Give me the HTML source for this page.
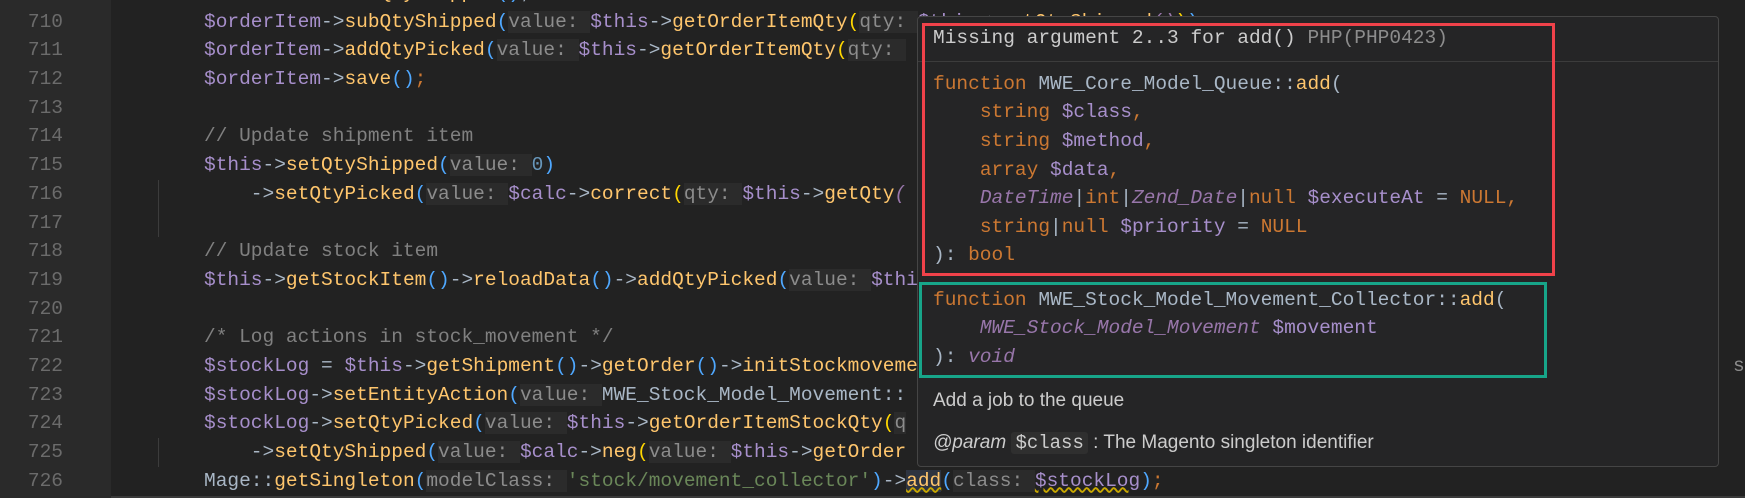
<!DOCTYPE html>
<html><head><meta charset="utf-8"><style>
*{margin:0;padding:0;box-sizing:border-box}
body{width:1745px;height:498px;overflow:hidden;background:#222222;position:relative;font-family:"Liberation Mono",monospace;font-size:19.5px;color:#a9b7c6}
#gut{position:absolute;left:0;top:0;width:111px;height:498px;background:#2a2a2a}
.ln{position:absolute;left:0;width:63px;text-align:right;color:#6b6b6b;line-height:28.7px;height:28.7px}
.cl{position:absolute;left:204px;white-space:pre;line-height:28.7px;height:28.7px}
.g{position:absolute;left:158px;width:1px;background:#3c3c3c}
.v{color:#a78fcb}.m{color:#ffc66d}.p{color:#4fa8ff}.y{color:#ffd700}.h{color:#8c8c8c;background:#2b2b2b}
.c{color:#808080}.s{color:#6a8759}.n{color:#6897bb}.k{color:#cc7832}.i{font-style:italic;color:#9876aa}.o{color:#a9b7c6}
#tip{position:absolute;left:917px;top:16px;width:802px;height:451px;background:#252526;border:1px solid #454545;border-radius:4px}
.tl{position:absolute;white-space:pre;line-height:28.6px;height:28.6px}
.sans{font-family:"Liberation Sans",sans-serif;font-size:19px;color:#cccccc}
</style></head><body>
<div id="gut"></div>
<div class="g" style="top:180px;height:57px"></div>
<div class="g" style="top:438px;height:29px"></div>
<div class="ln" style="top:7.6px">710</div>
<div class="ln" style="top:36.3px">711</div>
<div class="ln" style="top:65px">712</div>
<div class="ln" style="top:93.7px">713</div>
<div class="ln" style="top:122.4px">714</div>
<div class="ln" style="top:151.1px">715</div>
<div class="ln" style="top:179.8px">716</div>
<div class="ln" style="top:208.5px">717</div>
<div class="ln" style="top:237.2px">718</div>
<div class="ln" style="top:265.9px">719</div>
<div class="ln" style="top:294.6px">720</div>
<div class="ln" style="top:323.3px">721</div>
<div class="ln" style="top:352px">722</div>
<div class="ln" style="top:380.7px">723</div>
<div class="ln" style="top:409.4px">724</div>
<div class="ln" style="top:438.1px">725</div>
<div class="ln" style="top:466.8px">726</div>

<div class="cl" style="top:-21.1px"><span class="v">$orderItem</span>-&gt;<span class="m">setQtyShipped</span><span class="p">()</span>;</div>
<div class="cl" style="top:7.6px"><span class="v">$orderItem</span>-&gt;<span class="m">subQtyShipped</span><span class="p">(</span><span class="h">value: </span><span class="v">$this</span>-&gt;<span class="m">getOrderItemQty</span><span class="y">(</span><span class="h">qty: </span><span class="v">$this</span>-&gt;<span class="m">getQtyShipped</span><span class="i">()</span><span class="y">)</span><span class="p">)</span>;</div>
<div class="cl" style="top:36.3px"><span class="v">$orderItem</span>-&gt;<span class="m">addQtyPicked</span><span class="p">(</span><span class="h">value: </span><span class="v">$this</span>-&gt;<span class="m">getOrderItemQty</span><span class="y">(</span><span class="h">qty: </span></div>
<div class="cl" style="top:65px"><span class="v">$orderItem</span>-&gt;<span class="m">save</span><span class="p">()</span><span class="k">;</span></div>
<div class="cl c" style="top:122.4px">// Update shipment item</div>
<div class="cl" style="top:151.1px"><span class="v">$this</span>-&gt;<span class="m">setQtyShipped</span><span class="p">(</span><span class="h">value: </span><span class="n">0</span><span class="p">)</span></div>
<div class="cl" style="top:179.8px">    -&gt;<span class="m">setQtyPicked</span><span class="p">(</span><span class="h">value: </span><span class="v">$calc</span>-&gt;<span class="m">correct</span><span class="y">(</span><span class="h">qty: </span><span class="v">$this</span>-&gt;<span class="m">getQty</span><span class="i">(</span></div>
<div class="cl c" style="top:237.2px">// Update stock item</div>
<div class="cl" style="top:265.9px"><span class="v">$this</span>-&gt;<span class="m">getStockItem</span><span class="p">()</span>-&gt;<span class="m">reloadData</span><span class="p">()</span>-&gt;<span class="m">addQtyPicked</span><span class="p">(</span><span class="h">value: </span><span class="v">$this</span></div>
<div class="cl c" style="top:323.3px">/* Log actions in stock_movement */</div>
<div class="cl" style="top:352px"><span class="v">$stockLog</span> = <span class="v">$this</span>-&gt;<span class="m">getShipment</span><span class="p">()</span>-&gt;<span class="m">getOrder</span><span class="p">()</span>-&gt;<span class="m">initStockmovement</span></div>
<div class="cl" style="top:352px;left:1733px;color:#8c8c8c">s</div>
<div class="cl" style="top:380.7px"><span class="v">$stockLog</span>-&gt;<span class="m">setEntityAction</span><span class="p">(</span><span class="h">value: </span>MWE_Stock_Model_Movement::</div>
<div class="cl" style="top:409.4px"><span class="v">$stockLog</span>-&gt;<span class="m">setQtyPicked</span><span class="p">(</span><span class="h">value: </span><span class="v">$this</span>-&gt;<span class="m">getOrderItemStockQty</span><span class="y">(</span><span class="h">q</span></div>
<div class="cl" style="top:438.1px">    -&gt;<span class="m">setQtyShipped</span><span class="p">(</span><span class="h">value: </span><span class="v">$calc</span>-&gt;<span class="m">neg</span><span class="y">(</span><span class="h">value: </span><span class="v">$this</span>-&gt;<span class="m">getOrder</span></div>
<div class="cl" style="top:466.8px">Mage::<span class="m">getSingleton</span><span class="p">(</span><span class="h">modelClass: </span><span class="s">'stock/movement_collector'</span><span class="p">)</span>-&gt;<span class="m" style="background:#2e3440;text-decoration:underline wavy #c9a800">add</span><span class="p">(</span><span class="h">class: </span><span class="v" style="text-decoration:underline wavy #c9a800">$stockLog</span><span class="p">)</span><span class="k">;</span></div>
<div style="position:absolute;left:111px;top:496px;width:1634px;height:2px;background:#3a3a3a"></div>

<div id="tip">
 <div class="tl" style="left:15px;top:7px;color:#cccccc">Missing argument 2..3 for add() <span style="color:#8c8c8c">PHP(PHP0423)</span></div>
 <div style="position:absolute;left:0;top:44px;width:800px;height:1px;background:#3c3c3c"></div>
 <div style="position:absolute;left:4px;top:6px;width:633px;height:253px;border:3px solid #f0424a"></div>
 <div class="tl" style="left:15px;top:52.7px"><span class="k">function</span> MWE_Core_Model_Queue::<span class="m">add</span>(</div>
 <div class="tl" style="left:15px;top:81.3px">    <span class="k">string</span> <span class="v">$class</span><span class="k">,</span></div>
 <div class="tl" style="left:15px;top:109.9px">    <span class="k">string</span> <span class="v">$method</span><span class="k">,</span></div>
 <div class="tl" style="left:15px;top:138.5px">    <span class="k">array</span> <span class="v">$data</span><span class="k">,</span></div>
 <div class="tl" style="left:15px;top:167.1px">    <span class="i">DateTime</span>|<span class="k">int</span>|<span class="i">Zend_Date</span>|<span class="k">null</span> <span class="v">$executeAt</span> = <span class="k">NULL</span><span class="k">,</span></div>
 <div class="tl" style="left:15px;top:195.7px">    <span class="k">string</span>|<span class="k">null</span> <span class="v">$priority</span> = <span class="k">NULL</span></div>
 <div class="tl" style="left:15px;top:224.3px">): <span class="k">bool</span></div>
 <div style="position:absolute;left:1px;top:265px;width:628px;height:96px;border:3px solid #17a589"></div>
 <div class="tl" style="left:15px;top:268.7px"><span class="k">function</span> MWE_Stock_Model_Movement_Collector::<span class="m">add</span>(</div>
 <div class="tl" style="left:15px;top:297.3px">    <span class="i">MWE_Stock_Model_Movement</span> <span class="v">$movement</span></div>
 <div class="tl" style="left:15px;top:325.9px">): <span class="i">void</span></div>
 <div class="tl sans" style="left:15px;top:370px">Add a job to the queue</div>
 <div class="tl sans" style="left:15px;top:412px"><i>@param</i> <span style="font-family:'Liberation Mono',monospace;font-size:19px;background:#2f2f2f;border-radius:3px;padding:0 4px">$class</span> : The Magento singleton identifier</div>
</div>
</body></html>
